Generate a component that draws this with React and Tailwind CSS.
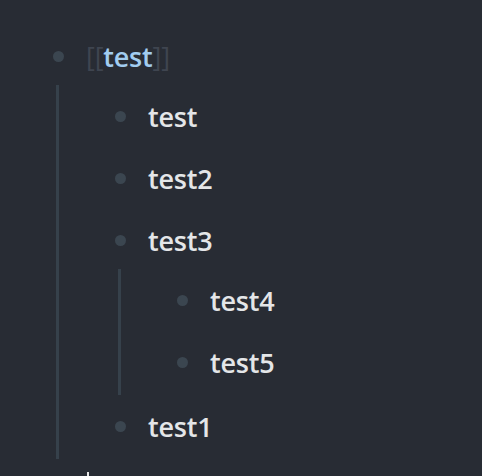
const font = { fontFamily: '"Open Sans", "Noto Sans", sans-serif' };

function Bullet() {
  return (
    <div className="flex w-[28px] shrink-0 items-center justify-center">
      <span className="h-[11px] w-[11px] rounded-full bg-[#3b4650]" />
    </div>
  );
}

function Row({ children }) {
  return (
    <div className="flex h-[62px] items-center">
      <Bullet />
      <div className="ml-[14px] text-[27px] font-semibold leading-none tracking-[-0.2px] text-[#e4e6e8]">{children}</div>
    </div>
  );
}

function Children({ children }) {
  return (
    <div className="ml-[12px] -mt-[2px] border-l-[3px] border-[#36414b] pb-[2px] pl-[47px]">
      {children}
    </div>
  );
}

export default function App() {
  return (
    <div className="h-[476px] w-[482px] overflow-hidden bg-[#282c34] pl-[44px] pt-[25px]" style={font}>
      <Row>
        <span className="font-normal text-[#3f4550]">[[</span>
        <span className="text-[#a2cdf0]">test</span>
        <span className="font-normal text-[#3f4550]">]]</span>
      </Row>
      <Children>
        <Row>test</Row>
        <Row>test2</Row>
        <Row>test3</Row>
        <Children>
          <Row>test4</Row>
          <Row>test5</Row>
        </Children>
        <Row>test1</Row>
      </Children>
      <div className="flex h-[62px] items-center">
        <Bullet />
        <div className="ml-[15px] h-[36px] w-[2px] bg-[#e8e8e8]" />
      </div>
    </div>
  );
}
